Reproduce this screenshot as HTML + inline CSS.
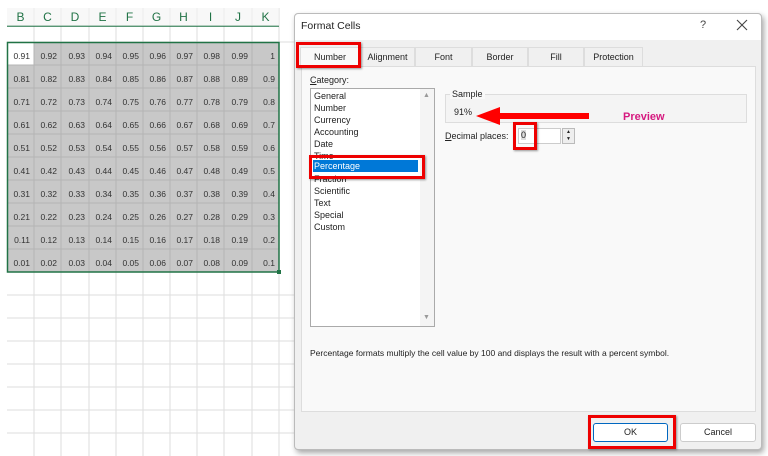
<!DOCTYPE html>
<html><head><meta charset="utf-8"><style>
*{margin:0;padding:0;box-sizing:border-box}
body{width:768px;height:456px;background:#fff;position:relative;overflow:hidden;font-family:"Liberation Sans",sans-serif;font-size:9px;color:#222}
.a{position:absolute}
.hd{position:absolute;top:8px;height:18px;color:#217346;font-size:12px;text-align:center;line-height:18px}
.c{position:absolute;height:23px;font-size:8.5px;line-height:23px;text-align:right;padding-right:4px;color:#333}
.li{position:absolute;left:314px;font-size:9px;color:#222}
.tab{position:absolute;top:47px;height:19px;font-size:9px;text-align:center;line-height:19px;border:1px solid #ddd;border-bottom:none;background:#f0f0f0;color:#222}
.red{position:absolute;border:3px solid #e00;box-shadow:1px 1px 2px rgba(0,0,0,.4)}
</style></head><body>
<svg class="a" style="left:0;top:0" width="295" height="456">
<rect x="7" y="26" width="282" height="430" fill="#fff"/>
<g stroke="#dedede" stroke-width="1">
<line x1="34" y1="8" x2="34" y2="456"/><line x1="61" y1="8" x2="61" y2="456"/><line x1="89" y1="8" x2="89" y2="456"/><line x1="116" y1="8" x2="116" y2="456"/><line x1="143" y1="8" x2="143" y2="456"/><line x1="170" y1="8" x2="170" y2="456"/><line x1="197" y1="8" x2="197" y2="456"/><line x1="224" y1="8" x2="224" y2="456"/><line x1="252" y1="8" x2="252" y2="456"/><line x1="279" y1="8" x2="279" y2="456"/>
<line x1="7" y1="42" x2="295" y2="42"/><line x1="7" y1="295" x2="295" y2="295"/><line x1="7" y1="318" x2="295" y2="318"/><line x1="7" y1="341" x2="295" y2="341"/><line x1="7" y1="364" x2="295" y2="364"/><line x1="7" y1="387" x2="295" y2="387"/><line x1="7" y1="410" x2="295" y2="410"/><line x1="7" y1="433" x2="295" y2="433"/>
</g>
<rect x="7" y="42" width="272" height="230" fill="#c8c8c8"/>
<rect x="7" y="42" width="27" height="23" fill="#fff"/>
<g stroke="#b4b4b4" stroke-width="1">
<line x1="34" y1="42" x2="34" y2="272"/><line x1="61" y1="42" x2="61" y2="272"/><line x1="89" y1="42" x2="89" y2="272"/><line x1="116" y1="42" x2="116" y2="272"/><line x1="143" y1="42" x2="143" y2="272"/><line x1="170" y1="42" x2="170" y2="272"/><line x1="197" y1="42" x2="197" y2="272"/><line x1="224" y1="42" x2="224" y2="272"/><line x1="252" y1="42" x2="252" y2="272"/>
<line x1="7" y1="65" x2="279" y2="65"/><line x1="7" y1="88" x2="279" y2="88"/><line x1="7" y1="111" x2="279" y2="111"/><line x1="7" y1="134" x2="279" y2="134"/><line x1="7" y1="157" x2="279" y2="157"/><line x1="7" y1="180" x2="279" y2="180"/><line x1="7" y1="203" x2="279" y2="203"/><line x1="7" y1="226" x2="279" y2="226"/><line x1="7" y1="249" x2="279" y2="249"/>
</g>
<rect x="7.5" y="42.5" width="271.5" height="229.5" fill="none" stroke="#217346" stroke-width="1.5"/>
<rect x="277" y="270" width="4" height="4" fill="#217346"/>
<line x1="7" y1="26" x2="279" y2="26" stroke="#217346" stroke-width="1.5"/>
<rect x="7" y="8" width="272" height="18" fill="#f3f3f3" opacity=".6"/>
</svg>
<div id="grid"></div>
<script>
var h="BCDEFGHIJK",xs=[7,34,61,89,116,143,170,197,224,252,279],s="";
for(var i=0;i<10;i++){s+='<div class="hd" style="left:'+xs[i]+'px;width:'+(xs[i+1]-xs[i])+'px">'+h[i]+'</div>';}
for(var r=0;r<10;r++){for(var c=0;c<10;c++){var v=(9-r)*10+c+1;var t=(v/100).toString();
s+='<div class="c" style="left:'+xs[c]+'px;top:'+(45+r*23)+'px;width:'+(xs[c+1]-xs[c])+'px">'+t+'</div>';}}
document.getElementById('grid').innerHTML=s;
</script>
<div class="a" style="left:294px;top:13px;width:468px;height:437px;background:#f0f0f0;border:1px solid #bbb;box-shadow:2px 3px 6px rgba(0,0,0,.35);border-radius:4px"></div>
<div class="a" style="left:295px;top:14px;width:466px;height:26px;background:#fff;border-radius:4px 4px 0 0"></div>
<div class="a" style="left:301px;top:20px;font-size:10.5px;color:#222">Format Cells</div>
<div class="a" style="left:700px;top:19px;font-size:11px;color:#444">?</div>
<svg class="a" style="left:736px;top:19px" width="12" height="12"><path d="M1 1L11 11M11 1L1 11" stroke="#444" stroke-width="1.1"/></svg>
<div class="a" style="left:301px;top:66px;width:455px;height:346px;background:#f9f9f9;border:1px solid #ddd"></div>
<div class="tab" style="left:300px;width:60px;background:#f9f9f9;height:21px">Number</div>
<div class="tab" style="left:360px;width:55px">Alignment</div>
<div class="tab" style="left:415px;width:57px">Font</div>
<div class="tab" style="left:472px;width:56px">Border</div>
<div class="tab" style="left:528px;width:56px">Fill</div>
<div class="tab" style="left:584px;width:59px">Protection</div>
<div class="red" style="left:296px;top:42px;width:65px;height:26px"></div>
<div class="a" style="left:310px;top:75px;font-size:9px"><u>C</u>ategory:</div>
<div class="a" style="left:310px;top:88px;width:125px;height:239px;background:#fff;border:1px solid #aaa"></div>
<div class="a" style="left:420px;top:89px;width:14px;height:237px;background:#f4f4f4"></div>
<div class="a" style="left:423px;top:92px;font-size:7px;color:#999">▲</div>
<div class="a" style="left:423px;top:314px;font-size:7px;color:#999">▼</div>
<div class="a" style="left:313px;top:160px;width:105px;height:12px;background:#0078d7"></div>
<div class="li" style="top:91px">General</div>
<div class="li" style="top:103px">Number</div>
<div class="li" style="top:115px">Currency</div>
<div class="li" style="top:127px">Accounting</div>
<div class="li" style="top:139px">Date</div>
<div class="li" style="top:151px">Time</div>
<div class="li" style="top:161px;color:#fff">Percentage</div>
<div class="li" style="top:174px">Fraction</div>
<div class="li" style="top:186px">Scientific</div>
<div class="li" style="top:198px">Text</div>
<div class="li" style="top:210px">Special</div>
<div class="li" style="top:222px">Custom</div>
<div class="red" style="left:309px;top:155px;width:116px;height:24px"></div>
<div class="a" style="left:445px;top:94px;width:302px;height:29px;border:1px solid #ddd;background:#f4f4f4"></div>
<div class="a" style="left:450px;top:89px;font-size:9px;background:#f9f9f9;padding:0 2px">Sample</div>
<div class="a" style="left:454px;top:107px;font-size:9px">91%</div>
<svg class="a" style="left:472px;top:105px" width="125" height="22"><polygon points="4,11 28,2 28,8 117,8 117,14 28,14 28,20" fill="#f00"/></svg>
<div class="a" style="left:623px;top:111px;font-size:11px;font-weight:bold;color:#d6197f">Preview</div>
<div class="a" style="left:445px;top:131px;font-size:9px"><u>D</u>ecimal places:</div>
<div class="a" style="left:518px;top:128px;width:43px;height:16px;background:#fff;border:1px solid #ccc"></div>
<div class="a" style="left:521px;top:130px;font-size:9px;background:#ddd">0</div>
<div class="a" style="left:562px;top:128px;width:13px;height:16px;background:#eee;border:1px solid #bbb;font-size:5px;text-align:center;line-height:7px">▲<br>▼</div>
<div class="red" style="left:513px;top:122px;width:24px;height:28px"></div>
<div class="a" style="left:310px;top:348px;font-size:8.5px">Percentage formats multiply the cell value by 100 and displays the result with a percent symbol.</div>
<div class="a" style="left:593px;top:423px;width:75px;height:19px;background:#fff;border:1px solid #0067c0;border-radius:3px;text-align:center;line-height:17px;font-size:9px">OK</div>
<div class="a" style="left:680px;top:423px;width:76px;height:19px;background:#fff;border:1px solid #ccc;border-radius:3px;text-align:center;line-height:17px;font-size:9px">Cancel</div>
<div class="red" style="left:588px;top:415px;width:88px;height:34px"></div>
</body></html>
